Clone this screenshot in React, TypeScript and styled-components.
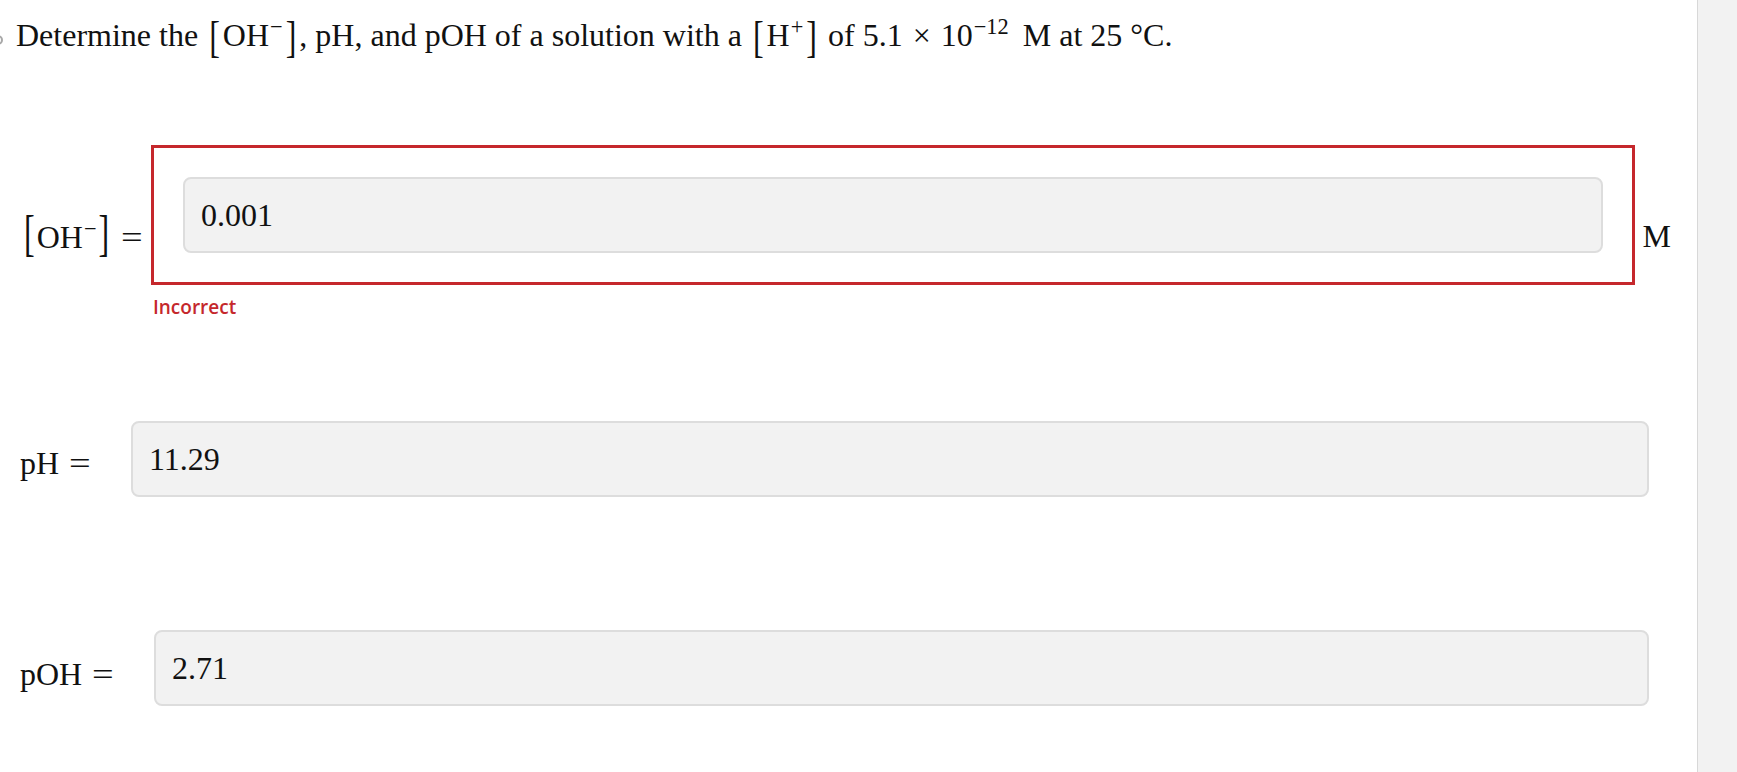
import React from "react";
import styled, { createGlobalStyle } from "styled-components";

const GlobalStyle = createGlobalStyle`
  html, body {
    margin: 0;
    padding: 0;
    background: #ffffff;
  }
  body {
    font-family: "Liberation Serif", "Times New Roman", serif;
    color: #111111;
  }
`;

const App: React.FC = () => {
  return (
    <Page>
      <GlobalStyle />
      <Main>
        <Question>
          <Marker />
          Determine the{" "}
          <Fence $scale={1.4} $shift={3} $gap={3}>[</Fence>
          OH<Sup>−</Sup>
          <Fence $scale={1.4} $shift={3} $gap={3}>]</Fence>, pH, and pOH of a solution with a{" "}
          <Fence $scale={1.4} $shift={3} $gap={3}>[</Fence>
          H<Sup>+</Sup>
          <Fence $scale={1.4} $shift={3} $gap={3}>]</Fence> of 5.1<Op>×</Op>10<Exponent>−12</Exponent> M at 25 °C.
        </Question>

        <Row $top={90} $left={22} $right={26}>
          <Label $width={129} $offset={72}>
            <Fence $scale={1.6} $shift={-2} $gap={2}>[</Fence>
            OH<Sup>−</Sup>
            <Fence $scale={1.6} $shift={-2} $gap={2}>]</Fence>
            <Eq>=</Eq>
          </Label>
          <FieldGroup>
            <Marked>
              <Input readOnly defaultValue="0.001" />
            </Marked>
            <Feedback>Incorrect</Feedback>
          </FieldGroup>
          <Unit>M</Unit>
        </Row>

        <Row $top={101} $left={20} $right={48}>
          <Label $width={111} $offset={22}>
            pH<Eq>=</Eq>
          </Label>
          <FieldGroup>
            <Input readOnly defaultValue="11.29" />
          </FieldGroup>
        </Row>

        <Row $top={133} $left={20} $right={48}>
          <Label $width={134} $offset={24}>
            pOH<Eq>=</Eq>
          </Label>
          <FieldGroup>
            <Input readOnly defaultValue="2.71" />
          </FieldGroup>
        </Row>
      </Main>
      <Sidebar />
    </Page>
  );
};

const Page = styled.div`
  display: flex;
  min-height: 100vh;
`;

const Main = styled.div`
  flex: 1;
  min-width: 0;
  display: flex;
  flex-direction: column;
`;

const Sidebar = styled.div`
  width: 39px;
  flex-shrink: 0;
  background: #f2f2f2;
  border-left: 1px solid #d8d8d8;
`;

const Question = styled.div`
  margin-top: 15px;
  font-size: 32px;
  line-height: 40px;
  white-space: nowrap;
`;

const Marker = styled.span`
  display: inline-block;
  box-sizing: border-box;
  width: 10px;
  height: 10px;
  margin-left: -7px;
  margin-right: 13px;
  border: 2px solid #a8a8a8;
  border-radius: 50%;
  vertical-align: 1px;
`;

const Fence = styled.span<{ $scale: number; $shift: number; $gap: number }>`
  display: inline-block;
  margin: 0 ${(p) => p.$gap}px;
  line-height: 30px;
  transform: translateY(${(p) => p.$shift}px) scaleY(${(p) => p.$scale});
  transform-origin: 50% 62%;
`;

const Sup = styled.sup`
  font-size: 0.7em;
  line-height: 0;
  vertical-align: 0.55em;
  margin-left: 1px;
`;

const Exponent = styled(Sup)`
  margin-right: 6px;
`;

const Op = styled.span`
  margin: 0 10px;
`;

const Row = styled.div<{ $top: number; $left: number; $right: number }>`
  display: flex;
  align-items: flex-start;
  margin-top: ${(p) => p.$top}px;
  padding-left: ${(p) => p.$left}px;
  padding-right: ${(p) => p.$right}px;
`;

const Label = styled.div<{ $width: number; $offset: number }>`
  width: ${(p) => p.$width}px;
  flex-shrink: 0;
  margin-top: ${(p) => p.$offset}px;
  font-size: 32px;
  line-height: 40px;
  white-space: nowrap;
`;

const Eq = styled.span`
  display: inline-block;
  margin-left: 10px;
  transform: scaleX(1.2);
  transform-origin: 0 50%;
`;

const FieldGroup = styled.div`
  flex: 1;
  min-width: 0;
  display: flex;
  flex-direction: column;
`;

const Marked = styled.div`
  border: 3px solid #c5282c;
  padding: 29px;
`;

const Input = styled.input`
  box-sizing: border-box;
  width: 100%;
  height: 76px;
  margin: 0;
  padding: 0 16px;
  border: 2px solid #dddddd;
  border-radius: 8px;
  background: #f2f2f2;
  font-family: "Liberation Serif", "Times New Roman", serif;
  font-size: 32px;
  color: #111111;
  outline: none;
`;

const Feedback = styled.div`
  margin-top: 9px;
  padding-left: 2px;
  font-family: "Open Sans", "Liberation Sans", sans-serif;
  font-weight: 600;
  font-size: 19px;
  line-height: 26px;
  color: #c5282c;
`;

const Unit = styled.div`
  margin-top: 71px;
  margin-left: 8px;
  font-size: 32px;
  line-height: 40px;
`;

export default App;
